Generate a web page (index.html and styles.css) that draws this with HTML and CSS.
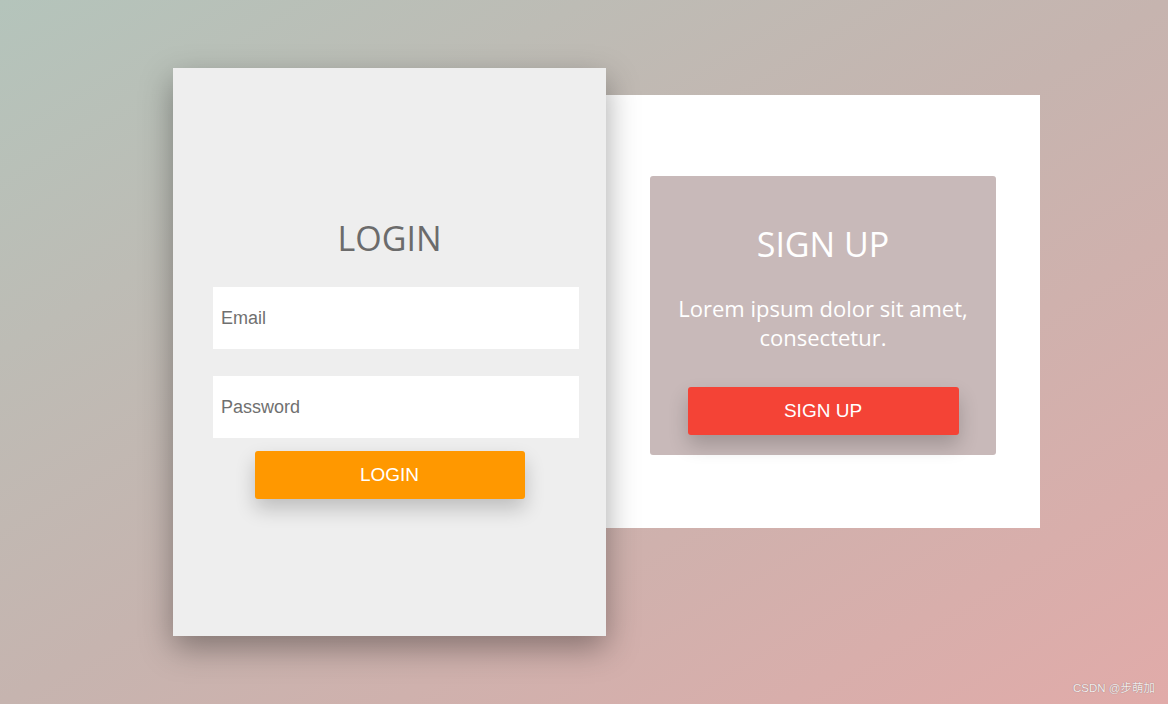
FILE: index.html
```html
<!DOCTYPE html>
<html lang="en">
<head>
    <meta charset="UTF-8">
    <meta name="viewport" content="width=device-width, initial-scale=1.0">
    <title>Login & Sign Up</title>
    <link rel="stylesheet" href="styles.css">
</head>
<body>
    <div class="container">
        <!-- Login panel, sits over the white box -->
        <div class="login-panel">
            <h2 class="login-title">LOGIN</h2>
            <input type="text" class="field" placeholder="Email">
            <input type="password" class="field" placeholder="Password">
            <button class="login-btn">LOGIN</button>
        </div>

        <!-- Sign up side -->
        <div class="signup-side">
            <div class="signup-box">
                <h2 class="signup-title">SIGN UP</h2>
                <p class="signup-text">Lorem ipsum dolor sit amet, consectetur.</p>
                <button class="signup-btn">SIGN UP</button>
            </div>
        </div>
    </div>

    <div class="watermark">CSDN @步萌加</div>
</body>
</html>
```

FILE: styles.css
```css
html, body {
    height: 100%;
}
body {
    margin: 0;
    padding: 95px 0 0 173px;
    box-sizing: border-box;
    background: linear-gradient(to bottom right, #b4c4bb, #c6b4af 50%, #e1aba9);
    font-family: "Liberation Sans", Arial, sans-serif;
    overflow: hidden;
}
.container {
    display: flex;
    width: 867px;
    height: 433px;
    background-color: #fff;
}
.login-panel {
    flex: 0 0 433px;
    height: 568px;
    margin-top: -27px;
    align-self: flex-start;
    background-color: #eee;
    box-shadow: 0 12px 30px rgba(0, 0, 0, 0.35);
    display: flex;
    flex-direction: column;
    align-items: center;
    padding-top: 150px;
    box-sizing: border-box;
    position: relative;
}
.login-title {
    margin: 0 0 29px;
    font-family: "Open Sans", sans-serif;
    font-weight: 400;
    font-size: 34px;
    line-height: 40px;
    color: #6b6b6b;
}
.field {
    align-self: flex-start;
    margin-left: 40px;
    width: 366px;
    height: 62px;
    box-sizing: border-box;
    border: none;
    outline: none;
    padding: 0 8px;
    margin-bottom: 27px;
    font-family: "Liberation Sans", Arial, sans-serif;
    font-size: 18px;
    background-color: #fff;
}
.field::placeholder {
    color: #707070;
}
.field + .field {
    margin-bottom: 13px;
}
.login-btn, .signup-btn {
    width: 270px;
    height: 48px;
    border: none;
    border-radius: 3px;
    color: #fff;
    font-family: "Liberation Sans", Arial, sans-serif;
    font-size: 19px;
    cursor: pointer;
    box-shadow: 0 10px 20px rgba(0, 0, 0, 0.2);
}
.login-btn {
    background-color: #ff9800;
}
.signup-side {
    flex: 1;
    display: flex;
    justify-content: center;
    padding-top: 81px;
}
.signup-box {
    width: 346px;
    height: 279px;
    background-color: #c8b9b9;
    border-radius: 3px;
    display: flex;
    flex-direction: column;
    align-items: center;
    text-align: center;
    color: #fff;
    font-family: "Open Sans", sans-serif;
}
.signup-title {
    margin: 48px 0 0;
    font-weight: 400;
    font-size: 34px;
    line-height: 40px;
}
.signup-text {
    margin: 30px 0 0;
    font-size: 22px;
    line-height: 29px;
    padding: 0 20px;
}
.signup-btn {
    margin-top: 35px;
    width: 271px;
    background-color: #f44336;
}
.watermark {
    position: absolute;
    right: 13px;
    bottom: 9px;
    font-family: "Liberation Sans", "Noto Sans CJK SC", sans-serif;
    font-size: 11.5px;
    color: #f4eeee;
    text-shadow: 0 0 1px rgba(0, 0, 0, 0.4);
}
```
